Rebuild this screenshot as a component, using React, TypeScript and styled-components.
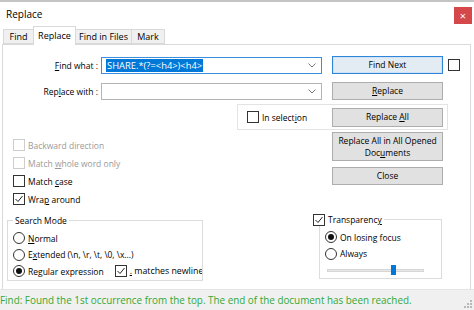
import React from "react";
import styled, { createGlobalStyle } from "styled-components";

const GlobalStyle = createGlobalStyle`
  html, body { margin: 0; padding: 0; background: #fff; }
  body { overflow: hidden; }
  * { box-sizing: border-box; }
`;

const Window = styled.div`
  width: 474px;
  height: 310px;
  display: flex;
  flex-direction: column;
  background: #fff;
  border-top: 2px solid #c4c4c4;
  font-family: "Open Sans", "Liberation Sans", sans-serif;
  font-size: 8.5px;
  color: #000;
  overflow: hidden;
`;

const TitleBar = styled.div`
  height: 24px;
  display: flex;
  align-items: flex-start;
  justify-content: space-between;
  padding-left: 6px;
`;

const Title = styled.span`
  font-size: 10px;
  line-height: 24px;
`;

const CloseBox = styled.div`
  width: 18px;
  height: 17px;
  margin-top: 5px;
  margin-right: 2px;
  background: #d4474b;
  color: #fff;
  font-size: 11px;
  line-height: 17px;
  text-align: center;
`;

const TabStrip = styled.div`
  height: 18px;
  display: flex;
  align-items: flex-end;
  padding-left: 3px;
  position: relative;
  z-index: 1;
`;

const Tab = styled.div<{ $w: number; $active?: boolean }>`
  width: ${(p) => p.$w}px;
  height: ${(p) => (p.$active ? 19 : 15)}px;
  margin-bottom: ${(p) => (p.$active ? -1 : 0)}px;
  border: 1px solid #d9d9d9;
  border-bottom: ${(p) => (p.$active ? "none" : "1px solid #d9d9d9")};
  background: ${(p) => (p.$active ? "#fff" : "#f0f0f0")};
  display: flex;
  align-items: ${(p) => (p.$active ? "flex-start" : "center")};
  padding-top: ${(p) => (p.$active ? 2 : 0)}px;
  justify-content: center;
  font-size: 9px;
  & + & { margin-left: -1px; }
`;

const Panel = styled.div`
  height: 245px;
  margin-left: 2px;
  width: 469px;
  border: 1px solid #d9d9d9;
  border-bottom: none;
  padding-top: 11px;
`;

const FieldRow = styled.div<{ $gap?: number }>`
  display: flex;
  align-items: center;
  height: 18px;
  margin-top: ${(p) => p.$gap ?? 0}px;
`;

const FieldLabel = styled.label`
  width: 95px;
  text-align: right;
  white-space: nowrap;
`;

const Combo = styled.div<{ $focused?: boolean }>`
  width: 221px;
  height: 17px;
  margin-left: 3px;
  border: 1px solid ${(p) => (p.$focused ? "#3a8ee0" : "#b4b4b4")};
  background: #fff;
  display: flex;
  align-items: center;
  padding-left: 4px;
  padding-right: 5px;
`;

const ComboText = styled.span`
  flex: 1;
  white-space: nowrap;
  overflow: hidden;
  font-size: 9.4px;
`;

const Selected = styled.span`
  background: #0078d7;
  color: #fff;
  padding: 1px 1px;
`;

const Chevron = () => (
  <svg width="8" height="5" viewBox="0 0 8 5">
    <path d="M0.5 0.5 L4 4 L7.5 0.5" fill="none" stroke="#777" strokeWidth="1" />
  </svg>
);

const Button = styled.button<{ $focused?: boolean; $h?: number }>`
  width: 111px;
  height: ${(p) => p.$h ?? 18}px;
  margin: 0;
  padding: 0;
  font-family: inherit;
  font-size: 8.5px;
  line-height: 12px;
  color: #000;
  background: ${(p) => (p.$focused ? "#e3ebf3" : "#e1e1e1")};
  border: 1px solid ${(p) => (p.$focused ? "#2f86d8" : "#adadad")};
  box-shadow: ${(p) => (p.$focused ? "inset 0 0 0 1px #cfe2f5" : "none")};
`;

const SideButton = styled(Button)`
  margin-left: 10px;
`;

const Box = styled.span<{ $disabled?: boolean }>`
  width: 12px;
  height: 12px;
  flex: none;
  border: 1px solid ${(p) => (p.$disabled ? "#cdcdcd" : "#333")};
  background: #fff;
  display: inline-flex;
  align-items: center;
  justify-content: center;
`;

const LoneBox = styled(Box)`
  margin-left: 5px;
`;

const Check = ({ checked, disabled }: { checked?: boolean; disabled?: boolean }) => (
  <Box $disabled={disabled}>
    {checked && (
      <svg width="10" height="10" viewBox="0 0 10 10">
        <path d="M1.5 5 L4 7.5 L8.5 2" fill="none" stroke="#222" strokeWidth="1" />
      </svg>
    )}
  </Box>
);

const Circle = styled.span`
  width: 12px;
  height: 12px;
  flex: none;
  border: 1px solid #333;
  border-radius: 50%;
  background: #fff;
  display: inline-flex;
  align-items: center;
  justify-content: center;
`;

const Dot = styled.span`
  width: 6px;
  height: 6px;
  border-radius: 50%;
  background: #111;
`;

const Radio = ({ checked }: { checked?: boolean }) => (
  <Circle>{checked && <Dot />}</Circle>
);

const Lower = styled.div`
  display: flex;
  margin-top: 4px;
`;

const LeftCol = styled.div`
  width: 234px;
  padding-left: 10px;
  padding-top: 32px;
`;

const Option = styled.div<{ $disabled?: boolean; $h?: number }>`
  height: ${(p) => p.$h ?? 18}px;
  display: flex;
  align-items: center;
  gap: 3px;
  white-space: nowrap;
  color: ${(p) => (p.$disabled ? "#9a9a9a" : "#000")};
`;

const Group = styled.fieldset<{ $w: number; $left: number; $top: number }>`
  width: ${(p) => p.$w}px;
  margin: ${(p) => p.$top}px 0 0 ${(p) => p.$left}px;
  border: 1px solid #dcdcdc;
  padding: 3px 0 0 5px;
  min-width: 0;
  overflow: hidden;
`;

const Legend = styled.legend<{ $shift?: number }>`
  padding: 0 2px;
  margin-left: ${(p) => p.$shift ?? 0}px;
  line-height: 13px;
  display: flex;
  align-items: center;
  gap: 3px;
  background: #fff;
`;

const Inline = styled.span`
  display: flex;
  align-items: center;
  gap: 3px;
  margin-left: 8px;
  font-size: 8.8px;
`;

const RightCol = styled.div`
  width: 211px;
`;

const SelectionBox = styled.div`
  height: 26px;
  border: 1px solid #e3e3e3;
  display: flex;
  align-items: center;
  padding-left: 9px;
  padding-right: 4px;
  gap: 3px;
`;

const PushRight = styled.div`
  margin-left: auto;
`;

const ButtonStack = styled.div`
  margin-left: 95px;
  margin-top: 2px;
  display: flex;
  flex-direction: column;
  gap: 6px;
`;

const TrackWrap = styled.div`
  width: 97px;
  height: 16px;
  margin-left: 2px;
  position: relative;
  display: flex;
  align-items: center;
`;

const Track = styled.div`
  width: 100%;
  height: 3px;
  background: #e7e7e7;
  border: 1px solid #d6d6d6;
`;

const Thumb = styled.div`
  position: absolute;
  top: 3px;
  width: 5px;
  height: 10px;
  background: #0078d7;
`;

const Slider = ({ value, max }: { value: number; max: number }) => (
  <TrackWrap>
    <Track />
    <Thumb style={{ left: `calc(${(value / max) * 100}% - 2px)` }} />
  </TrackWrap>
);

const StatusBar = styled.div`
  flex: 1;
  background: #f0f0f0;
  border-top: 1px solid #e4e4e4;
  display: flex;
  align-items: center;
  justify-content: space-between;
  font-size: 9.9px;
  color: #34a834;
  white-space: nowrap;
  padding-right: 2px;
`;

const Grip = () => (
  <svg width="8" height="8" viewBox="0 0 8 8" style={{ alignSelf: "flex-end", marginBottom: 2 }}>
    {[
      [6, 0], [6, 3], [3, 3], [6, 6], [3, 6], [0, 6],
    ].map(([x, y]) => (
      <rect key={`${x}-${y}`} x={x} y={y} width="2" height="2" fill="#b8b8b8" />
    ))}
  </svg>
);

export default function App() {
  return (
    <>
      <GlobalStyle />
      <Window>
        <TitleBar>
          <Title>Replace</Title>
          <CloseBox>×</CloseBox>
        </TitleBar>

        <TabStrip>
          <Tab $w={31}>Find</Tab>
          <Tab $w={43} $active>Replace</Tab>
          <Tab $w={57}>Find in Files</Tab>
          <Tab $w={34}>Mark</Tab>
        </TabStrip>

        <Panel>
          <FieldRow>
            <FieldLabel><u>F</u>ind what :</FieldLabel>
            <Combo $focused>
              <ComboText><Selected>SHARE.*(?=&lt;h4&gt;)&lt;h4&gt;</Selected></ComboText>
              <Chevron />
            </Combo>
            <SideButton $focused>Find Next</SideButton>
            <LoneBox />
          </FieldRow>

          <FieldRow $gap={8}>
            <FieldLabel>Rep<u>l</u>ace with :</FieldLabel>
            <Combo>
              <ComboText />
              <Chevron />
            </Combo>
            <SideButton><u>R</u>eplace</SideButton>
          </FieldRow>

          <Lower>
            <LeftCol>
              <Option $disabled><Check disabled /><span>Backward direction</span></Option>
              <Option $disabled><Check disabled /><span>Match <u>w</u>hole word only</span></Option>
              <Option><Check /><span>Match <u>c</u>ase</span></Option>
              <Option><Check checked /><span>Wra<u>p</u> around</span></Option>

              <Group $w={196} $left={-6} $top={6}>
                <Legend>Search Mode</Legend>
                <Option $h={16.5}><Radio /><span><u>N</u>ormal</span></Option>
                <Option $h={16.5}><Radio /><span>E<u>x</u>tended (\n, \r, \t, \0, \x...)</span></Option>
                <Option $h={16.5}>
                  <Radio checked />
                  <span>Re<u>g</u>ular expression</span>
                  <Inline><Check checked /><span><u>.</u> matches newline</span></Inline>
                </Option>
              </Group>
            </LeftCol>

            <RightCol>
              <SelectionBox>
                <Check />
                <span>In select<u>i</u>on</span>
                <PushRight>
                  <Button $h={19}>Replace <u>A</u>ll</Button>
                </PushRight>
              </SelectionBox>

              <ButtonStack>
                <Button $h={29}>Replace All in All Opened<br />Doc<u>u</u>ments</Button>
                <Button>Close</Button>
              </ButtonStack>

              <Group $w={123} $left={82} $top={28}>
                <Legend $shift={-14}><Check checked /><span>Transparenc<u>y</u></span></Legend>
                <Option $h={16.5}><Radio checked /><span>On losing focus</span></Option>
                <Option $h={16.5}><Radio /><span>Always</span></Option>
                <Slider value={68} max={100} />
              </Group>
            </RightCol>
          </Lower>
        </Panel>

        <StatusBar>
          <span>Find: Found the 1st occurrence from the top. The end of the document has been reached.</span>
          <Grip />
        </StatusBar>
      </Window>
    </>
  );
}
